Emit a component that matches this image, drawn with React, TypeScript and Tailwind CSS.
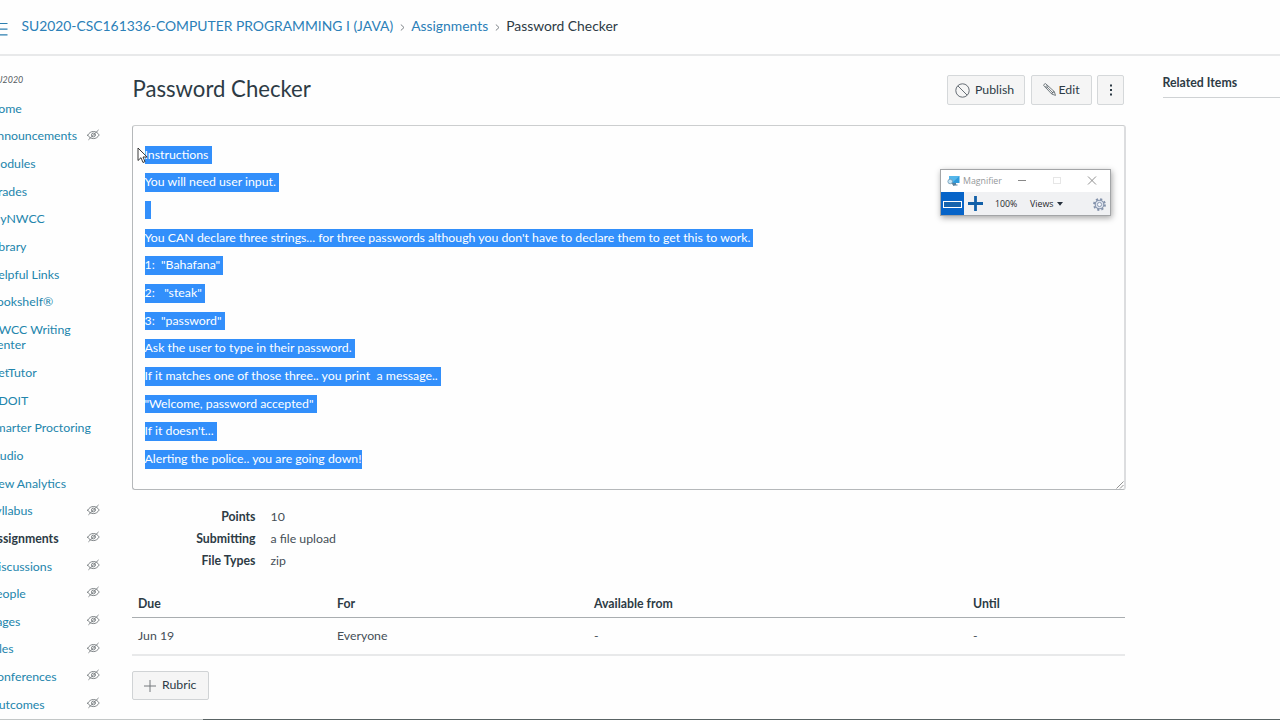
type NavItem = { label: string; hidden?: boolean; active?: boolean };

const NAV: NavItem[] = [
  { label: "Home" },
  { label: "Announcements", hidden: true },
  { label: "Modules" },
  { label: "Grades" },
  { label: "MyNWCC" },
  { label: "Library" },
  { label: "Helpful Links" },
  { label: "Bookshelf®" },
  { label: "NWCC Writing Center" },
  { label: "NetTutor" },
  { label: "NDOIT" },
  { label: "Smarter Proctoring" },
  { label: "Studio" },
  { label: "New Analytics" },
  { label: "Syllabus", hidden: true },
  { label: "Assignments", hidden: true, active: true },
  { label: "Discussions", hidden: true },
  { label: "People", hidden: true },
  { label: "Pages", hidden: true },
  { label: "Files", hidden: true },
  { label: "Conferences", hidden: true },
  { label: "Outcomes", hidden: true },
];

const LINES = [
  "Instructions ",
  "You will need user input. ",
  "\u00a0 ",
  "You CAN declare three strings... for three passwords although you don't have to declare them to get this to work. ",
  "1:  \"Bahafana\" ",
  "2:   \"steak\" ",
  "3:  \"password\" ",
  "Ask the user to type in their password. ",
  "If it matches one of those three.. you print  a message.. ",
  "\"Welcome, password accepted\" ",
  "If it doesn't... ",
  "Alerting the police.. you are going down!",
];

const DETAILS = [
  ["Points", "10"],
  ["Submitting", "a file upload"],
  ["File Types", "zip"],
];

function EyeOff() {
  return (
    <svg className="mt-[0.300px] h-[12px] w-[13px] shrink-0" viewBox="0 0 13 12" fill="none" stroke="#74797d" strokeWidth="0.9" strokeLinecap="round">
      <path d="M0.7 6.2C2.2 3.7 4.1 2.5 6.4 2.5c2.4 0 4.3 1.2 5.8 3.5-1.5 2.4-3.4 3.6-5.8 3.6C4.1 9.600 2.200 8.500 0.700 6.200Z" />
      <circle cx="6.4" cy="6" r="1.9" />
      <path d="M1.700 10.600 11.300 1.200" />
    </svg>
  );
}

function Breadcrumbs() {
  return (
    <header className="flex h-[56px] shrink-0 items-center border-b-2 border-[#e8e9ea] pb-[2px] text-[13.870px] leading-[20px]">
      <svg className="mt-[5px] h-[14px] w-[8px] shrink-0" viewBox="0 0 8 14" stroke="#2d7fb0" strokeWidth="1.2">
        <path d="M0 1.500h7.500M0 7.200h7.500M0 12.900h7.500" />
      </svg>
      <nav className="ml-[13.5px] flex items-center whitespace-pre text-[#2b80b8]">
        <a>SU2020-CSC161336-COMPUTER PROGRAMMING I (JAVA)</a>
        <Chevron />
        <a>Assignments</a>
        <Chevron />
        <span className="text-[#2d3b45]">Password Checker</span>
      </nav>
    </header>
  );
}

function Chevron() {
  return (
    <svg className="mx-[6.500px] mt-[2px] h-[7px] w-[5px]" viewBox="0 0 5 7" fill="none" stroke="#6f757a" strokeWidth="0.900">
      <path d="M0.800 0.500 4 3.500 0.800 6.500" />
    </svg>
  );
}

function Sidebar() {
  return (
    <aside className="w-[132px] shrink-0 overflow-hidden">
      <div className="-ml-[11px] w-[143px]">
        <p className="pt-[15.500px] pl-[3px] text-[8.900px] italic leading-[16px] text-[#555c62]">SU2020</p>
        <ul className="mt-[7px] text-[12.300px] leading-[15.370px]">
          {NAV.map((n) => (
            <li key={n.label} className="flex items-start py-[6.150px]">
              <span className={n.active ? "w-[98px] font-bold text-[#2d3b45]" : "w-[98px] text-[#2285ac]"}>
                {n.label === "Smarter Proctoring" ? <span className="whitespace-nowrap">{n.label}</span> : n.label}
              </span>
              {n.hidden && <EyeOff />}
            </li>
          ))}
        </ul>
      </div>
    </aside>
  );
}

function Toolbar() {
  const btn = "flex h-[29.500px] items-center rounded-[2px] border border-[#d5d8da] bg-[#f5f5f5]";
  return (
    <div className="flex h-[69px] items-start justify-between">
      <h1 className="mt-[18px] ml-[0.500px] text-[22.150px] leading-[30px]">Password Checker</h1>
      <div className="mt-[19px] mr-[1.500px] flex gap-[5.500px] text-[12.300px]">
        <button className={btn + " w-[78.500px] pl-[7px]"}>
          <svg className="mt-[2px] mr-[5.500px] h-[15px] w-[15px]" viewBox="0 0 15 15" fill="none" stroke="#565f66" strokeWidth="0.900">
            <circle cx="7.500" cy="7.500" r="6.700" />
            <path d="m2.900 2.900 9.200 9.200" />
          </svg>
          Publish
        </button>
        <button className={btn + " w-[61px] pl-[11px]"}>
          <svg className="mr-[3px] h-[13px] w-[13px]" viewBox="0 0 13 13" fill="none" stroke="#565f66" strokeWidth="0.800" strokeLinejoin="round">
            <path d="M0.700 2.500Q0.800 0.900 2.500 0.600L11.300 8.600 12.500 12.400 8.800 11.100ZM2.300 4.100 4.200 2.200M3.300 5.100 5.200 3.200M3.700 3.800l6.300 6.200M8.800 11.100l0.300-1.400 1.200-0.100 0.100-1 0.900 0" />
          </svg>
          Edit
        </button>
        <button className={btn + " w-[27px] justify-center"}>
          <svg className="mt-[1px] h-[12px] w-[4px]" viewBox="0 0 4 12" fill="#2d3b45">
            <rect x="1" y="0.500" width="2" height="2" />
            <rect x="1" y="5" width="2" height="2" />
            <rect x="1" y="9.500" width="2" height="2" />
          </svg>
        </button>
      </div>
    </div>
  );
}

function Description() {
  return (
    <section className="relative h-[365px] w-[994px] rounded-[3px] border border-r-2 border-[#b5b8ba] border-t-[#cccecf] border-r-[#dcdddf] pt-[19.700px] pl-[11.500px] text-[12.300px] leading-[18.460px] text-white">
      {LINES.map((t, i) => (
        <p key={i} className="mb-[9.220px] whitespace-pre">
          <span className="inline-block h-[18.460px] bg-[#328ffb] align-top">{t === "\u00a0 " ? <span className="inline-block w-[6px]"> </span> : t}</span>
        </p>
      ))}
      <svg className="absolute right-0 bottom-0 h-[8px] w-[8px]" viewBox="0 0 8 8" stroke="#777" strokeWidth="0.800">
        <path d="M0.500 7.500l7-7M4 7.500 7.500 4" />
      </svg>
    </section>
  );
}

function Magnifier() {
  return (
    <div className="absolute top-[169px] left-[940px] flex h-[47px] w-[171px] flex-col border border-[#a3a5a7] bg-white font-['Open_Sans',sans-serif] text-[8.800px] shadow-[1px_2px_6px_rgba(0,0,0,0.35)]">
      <div className="flex h-[22px] items-center text-[#94979a]">
        <svg className="ml-[6px] h-[12px] w-[13px]" viewBox="0 0 13 12">
          <rect x="2" y="1" width="10.500" height="7" fill="#2f9bdc" />
          <path d="M2 1h10.500L5 8H2Z" fill="#55b6ea" />
          <path d="M6 8h3v1.500h1.500v1H6Z" fill="#59819d" />
          <circle cx="3.200" cy="6.500" r="2.300" fill="#c7e6f6" stroke="#6f98b4" strokeWidth="0.800" />
          <path d="m5 8.200 2.200 2.500" stroke="#59819d" strokeWidth="1.200" />
        </svg>
        <span className="ml-[3px] w-[39px] leading-[12px]">Magnifier</span>
        <svg className="-mt-px ml-[16px] h-[9px] w-[80px]" viewBox="0 0 80 9" fill="none">
          <path d="M0 4.500h8" stroke="#888" />
          <rect x="35.500" y="1.500" width="7" height="6" stroke="#e6e6e6" />
          <path d="m70 0.500 8 8m0-8-8 8" stroke="#858585" strokeWidth="0.900" />
        </svg>
      </div>
      <div className="flex h-[23px] items-center bg-[#f0f1f3] text-[#26282c]">
        <div className="flex h-full w-[23px] items-center justify-center bg-[#0764c8]">
          <div className="mt-px h-[7px] w-[19px] border-[1.500px] border-white bg-[#1663ad]" />
        </div>
        <svg className="ml-[4px] h-[15px] w-[15px]" viewBox="0 0 15 15" stroke="#1260a8" strokeWidth="2.800">
          <path d="M7.500 0v15M0 7.500h15" />
        </svg>
        <span className="mt-[2px] ml-[12px] w-[24px]">100%</span>
        <span className="mt-[2px] ml-[11px] w-[24px]">Views</span>
        <svg className="mt-px ml-[3px] h-[4px] w-[6px]" viewBox="0 0 6 4" fill="#26303c">
          <path d="M0 0h6L3 3.800Z" />
        </svg>
        <svg className="mt-px ml-[29.500px] h-[13px] w-[13px]" viewBox="0 0 13 13" fill="none" stroke="#8392ab">
          <circle cx="6.500" cy="6.500" r="5.500" strokeWidth="1.800" strokeDasharray="2.160 2.160" />
          <circle cx="6.500" cy="6.500" r="4.300" fill="#dfe5ee" strokeWidth="1.100" />
          <circle cx="6.500" cy="6.500" r="2.100" fill="#f5f7fa" strokeWidth="0.900" />
        </svg>
      </div>
    </div>
  );
}

export default function App() {
  return (
    <div className="relative flex h-[720px] w-[1280px] flex-col overflow-hidden bg-[#fefefe] font-[Lato,sans-serif] text-[#2d3b45]">
      <Breadcrumbs />
      <div className="flex min-h-0 flex-1 overflow-hidden">
        <Sidebar />
        <main className="w-[993.500px] shrink-0">
          <Toolbar />
          <Description />
          <dl className="mt-[16px] text-[12.300px] leading-[22px]">
            {DETAILS.map(([k, v]) => (
              <div key={k} className="flex">
                <dt className="w-[123.500px] text-right font-bold">{k}</dt>
                <dd className="ml-[15px] text-[#454f57]">{v}</dd>
              </div>
            ))}
          </dl>
          <table className="mt-[17px] w-[993px] table-fixed border-collapse text-left text-[12.300px] leading-[18px]">
            <colgroup>
              <col className="w-[199px]" />
              <col className="w-[257px]" />
              <col className="w-[379px]" />
              <col />
            </colgroup>
            <thead>
              <tr className="h-[28px] border-b border-[#a9adb0]">
                {["Due", "For", "Available from", "Until"].map((h) => (
                  <th key={h} className="p-0 pt-[2px] pl-[6px] font-bold">{h}</th>
                ))}
              </tr>
            </thead>
            <tbody>
              <tr className="h-[38px] border-b-2 border-[#e8e9ea] text-[#454f57]">
                {["Jun 19", "Everyone", "-", "-"].map((c, i) => (
                  <td key={i} className="p-0 pl-[6px]">{c}</td>
                ))}
              </tr>
            </tbody>
          </table>
          <button className="mt-[15px] flex h-[29px] w-[77px] items-center rounded-[2px] border border-[#d0d3d5] bg-[#f5f5f5] pb-px pl-[11px] text-[12.300px]">
            <svg className="mt-[2px] mr-[6px] h-[12px] w-[12px]" viewBox="0 0 12 12" stroke="#74797d">
              <path d="M6 0v12M0 6h12" />
            </svg>
            Rubric
          </button>
        </main>
        <aside className="ml-[37px] flex-1">
          <h2 className="mt-[16px] h-[26px] border-b border-[#cfd2d4] text-[12.300px] leading-[22px] font-bold">Related Items</h2>
        </aside>
      </div>
      <div className="flex h-px shrink-0">
        <div className="w-[203px] bg-[#c3c7c7]" />
        <div className="flex-1 bg-[#596364]" />
      </div>
      <Magnifier />
      <svg className="absolute top-[147px] left-[137px] h-[17px] w-[11px]" viewBox="0 0 11 17" fill="#fff" stroke="#222" strokeWidth="0.900">
        <path d="M1 1v12.500l3-2.800 2 4.800 2-0.900-2-4.600h4.100Z" />
      </svg>
    </div>
  );
}
